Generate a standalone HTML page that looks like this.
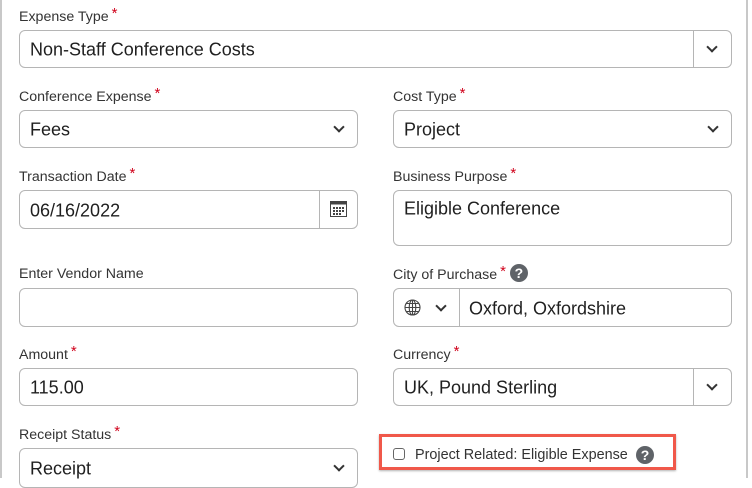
<!DOCTYPE html>
<html><head><style>
body{margin:0;width:752px;height:478px;overflow:hidden;background:#fff;font-family:"Liberation Sans",Arial,sans-serif;color:#222;position:relative}
.l{position:absolute;font-size:14.2px;color:#333}
.l b{color:#d0021b;font-weight:normal;font-size:15px;position:relative;top:-3px;margin-left:3px}
.box{position:absolute;border:1px solid #b5b5b5;border-radius:6px;box-sizing:border-box;font-size:18px;color:#1f1f1f;background:#fff}
.box span{position:absolute;left:10px;top:50%;transform:translateY(-45%)}
.div{position:absolute;top:0;bottom:0;border-left:1px solid #b5b5b5}
.chev{position:absolute;top:50%;width:6px;height:6px;border-right:2px solid #333;border-bottom:2px solid #333;transform:translate(-50%,-75%) rotate(45deg)}
.q{display:inline-block;width:18px;height:18px;border-radius:50%;background:#5f6368;color:#fff;font-weight:bold;font-size:14px;text-align:center;line-height:18px;vertical-align:middle}
</style></head><body>
<div style="position:absolute;left:0;top:0;width:2px;height:478px;background:#c8c8c8"></div>
<div style="position:absolute;left:746px;top:0;width:2px;height:478px;background:#c8c8c8"></div>

<div class="l" style="left:19px;top:8px">Expense Type<b>*</b></div>
<div class="box" style="left:19px;top:30px;width:713px;height:38px"><span>Non-Staff Conference Costs</span><div class="div" style="left:673px"></div><div class="chev" style="left:692px"></div></div>

<div class="l" style="left:19px;top:88px">Conference Expense<b>*</b></div>
<div class="box" style="left:19px;top:110px;width:339px;height:38px"><span>Fees</span><div class="chev" style="left:319px"></div></div>
<div class="l" style="left:393px;top:88px">Cost Type<b>*</b></div>
<div class="box" style="left:393px;top:110px;width:339px;height:38px"><span>Project</span><div class="chev" style="left:319px"></div></div>

<div class="l" style="left:19px;top:168px">Transaction Date<b>*</b></div>
<div class="box" style="left:19px;top:190px;width:339px;height:39px"><span>06/16/2022</span><div class="div" style="left:299px"></div>
<svg style="position:absolute;left:310px;top:10px" width="17" height="16" viewBox="0 0 17 16"><rect x="0.5" y="0.5" width="16" height="15" fill="#fff" stroke="#444"/><rect x="0.5" y="0.5" width="16" height="3" fill="#444"/><g fill="#444"><rect x="3" y="6" width="2" height="2"/><rect x="6" y="6" width="2" height="2"/><rect x="9" y="6" width="2" height="2"/><rect x="12" y="6" width="2" height="2"/><rect x="3" y="9" width="2" height="2"/><rect x="6" y="9" width="2" height="2"/><rect x="9" y="9" width="2" height="2"/><rect x="12" y="9" width="2" height="2"/><rect x="3" y="12" width="2" height="2"/><rect x="6" y="12" width="2" height="2"/><rect x="9" y="12" width="2" height="2"/></g></svg></div>
<div class="l" style="left:393px;top:168px">Business Purpose<b>*</b></div>
<div class="box" style="left:393px;top:190px;width:339px;height:56px"><span style="top:17px">Eligible Conference</span></div>

<div class="l" style="left:19px;top:266px">Enter Vendor Name</div>
<div class="box" style="left:19px;top:288px;width:339px;height:39px"></div>
<div class="l" style="left:393px;top:266px">City of Purchase<b>*</b> <span class="q" style="position:relative;top:-2px">?</span></div>
<div class="box" style="left:393px;top:288px;width:339px;height:39px">
<svg style="position:absolute;left:10px;top:10px" width="17" height="17" viewBox="0 0 17 17" fill="none" stroke="#444" stroke-width="1.1"><circle cx="8.5" cy="8.5" r="7.5"/><ellipse cx="8.5" cy="8.5" rx="3.3" ry="7.5"/><path d="M1 8.5h15M2.5 4.5h12M2.5 12.5h12M8.5 1v15"/></svg>
<div class="chev" style="left:47px"></div><div class="div" style="left:65px"></div><span style="left:75px">Oxford, Oxfordshire</span></div>

<div class="l" style="left:19px;top:346px">Amount<b>*</b></div>
<div class="box" style="left:19px;top:368px;width:339px;height:38px"><span>115.00</span></div>
<div class="l" style="left:393px;top:346px">Currency<b>*</b></div>
<div class="box" style="left:393px;top:368px;width:339px;height:38px"><span>UK, Pound Sterling</span><div class="div" style="left:299px"></div><div class="chev" style="left:318px"></div></div>

<div class="l" style="left:19px;top:426px">Receipt Status<b>*</b></div>
<div class="box" style="left:19px;top:448px;width:339px;height:40px"><span>Receipt</span><div class="chev" style="left:319px"></div></div>

<div style="position:absolute;left:379px;top:434px;width:297px;height:36px;box-sizing:border-box;border:3px solid #f0584a;box-shadow:0 1px 2px rgba(0,0,0,.3)"></div>
<div style="position:absolute;left:393px;top:448px;width:12px;height:12px;border:1px solid #666;border-radius:3px;box-sizing:border-box"></div>
<div class="l" style="left:415px;top:447px;font-size:14.4px;color:#333">Project Related: Eligible Expense</div>
<span class="q" style="position:absolute;left:636px;top:446px">?</span>
</body></html>
